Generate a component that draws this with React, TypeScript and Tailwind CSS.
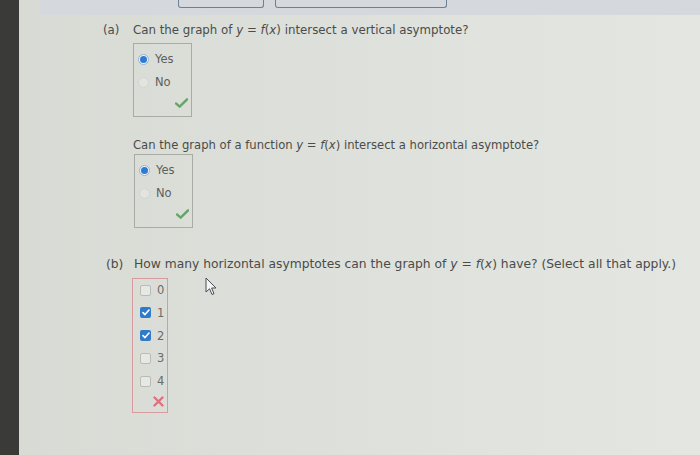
import React from 'react';

const font = { fontFamily: '"DejaVu Sans", Verdana, sans-serif' };

function Radio({ on }: { on: boolean }) {
  if (on) {
    return (
      <span className="flex h-[11px] w-[11px] items-center justify-center rounded-full border border-[#8fb4dc] bg-[#eef3f8]">
        <span className="h-[7px] w-[7px] rounded-full bg-[#2f79d0]" />
      </span>
    );
  }
  return <span className="h-[11px] w-[11px] rounded-full border border-[#d3d5d0] bg-[#e2e4df]" />;
}

function Check() {
  return (
    <svg width="13" height="10" viewBox="0 0 14 10">
      <path d="M1 5.5 L5 9 L13 1" fill="none" stroke="#66a46a" strokeWidth="2.6" strokeLinecap="round" strokeLinejoin="round" />
    </svg>
  );
}

function Cross() {
  return (
    <svg width="11" height="11" viewBox="0 0 11 11">
      <path d="M1.5 1.5 L9.5 9.5 M9.5 1.5 L1.5 9.5" stroke="#e0707e" strokeWidth="2.4" strokeLinecap="round" />
    </svg>
  );
}

function Box({ on }: { on: boolean }) {
  if (on) {
    return (
      <span className="flex h-[11px] w-[11px] items-center justify-center rounded-[2px] bg-[#2f7ac9]">
        <svg width="8" height="7" viewBox="0 0 8 7">
          <path d="M1 3.6 L3 5.6 L7 1" fill="none" stroke="#fff" strokeWidth="1.6" strokeLinecap="round" strokeLinejoin="round" />
        </svg>
      </span>
    );
  }
  return <span className="h-[11px] w-[11px] rounded-[2px] border border-[#b9bbb6] bg-[#e6e8e4]" />;
}

function YesNo() {
  return (
    <div className="flex w-[59px] flex-col border border-[#a9aca6] pb-[8px] pl-[4px] pt-[7px] text-[11.5px]">
      <div className="flex h-[16px] items-center gap-[6px]">
        <Radio on />
        <span className="text-[#5d5f5c]">Yes</span>
      </div>
      <div className="mt-[7px] flex h-[16px] items-center gap-[6px]">
        <Radio on={false} />
        <span className="text-[#5d5f5c]">No</span>
      </div>
      <div className="mt-[8px] flex justify-end pr-[3px]">
        <Check />
      </div>
    </div>
  );
}

const Fx = () => (
  <>
    <i>y</i> = <i>f</i>(<i>x</i>)
  </>
);

export default function App() {
  const opts = [
    { n: '0', on: false },
    { n: '1', on: true },
    { n: '2', on: true },
    { n: '3', on: false },
    { n: '4', on: false },
  ];

  return (
    <div className="relative flex h-[455px] w-[700px] overflow-hidden bg-linear-to-r from-[#d8dbd4] to-[#e4e6e2] leading-[16px] text-[#4a4c49]" style={font}>
      <div className="w-[19px] shrink-0 bg-[#3a3a38]" />
      <div className="flex flex-1 flex-col">
        <div className="ml-[21px] flex h-[15px] items-start bg-[#d5d9de]">
          <div className="ml-[138px] h-[8px] w-[86px] rounded-b-[3px] border-x border-b border-[#6f7f96]" />
          <div className="ml-[11px] h-[8px] w-[172px] rounded-b-[3px] border-x border-b border-[#6f7f96]" />
        </div>

        <div className="ml-[84px] mt-[7px] flex text-[11.8px]">
          <span className="w-[30px]">(a)</span>
          <span>
            Can the graph of <Fx /> intersect a vertical asymptote?
          </span>
        </div>
        <div className="ml-[114px] mt-[5px]">
          <YesNo />
        </div>

        <div className="ml-[114px] mt-[20px] text-[11.6px]">
          Can the graph of a function <Fx /> intersect a horizontal asymptote?
        </div>
        <div className="ml-[115px] mt-[1px]">
          <YesNo />
        </div>

        <div className="ml-[87px] mt-[28px] flex text-[12.3px]">
          <span className="w-[28px]">(b)</span>
          <span>
            How many horizontal asymptotes can the graph of <Fx /> have? (Select all that apply.)
          </span>
        </div>
        <div className="ml-[113px] mt-[6px] flex w-[36px] flex-col border border-[#d79b9f] pb-[5px] pl-[7px] pt-[3px] text-[11.5px]">
          {opts.map((o) => (
            <div key={o.n} className="mb-[6.8px] flex h-[16px] items-center gap-[6px]">
              <Box on={o.on} />
              <span className="text-[#6a6c69]">{o.n}</span>
            </div>
          ))}
          <div className="flex justify-end pr-[3px]">
            <Cross />
          </div>
        </div>
      </div>

      <svg className="absolute left-[205px] top-[277px]" width="12" height="19" viewBox="0 0 12 19">
        <path d="M1 1 L1 15 L4.5 11.8 L7 17.5 L9 16.6 L6.6 11 L11 11 Z" fill="#f4f4f2" stroke="#4a4c55" strokeWidth="1" strokeLinejoin="round" />
      </svg>
    </div>
  );
}
